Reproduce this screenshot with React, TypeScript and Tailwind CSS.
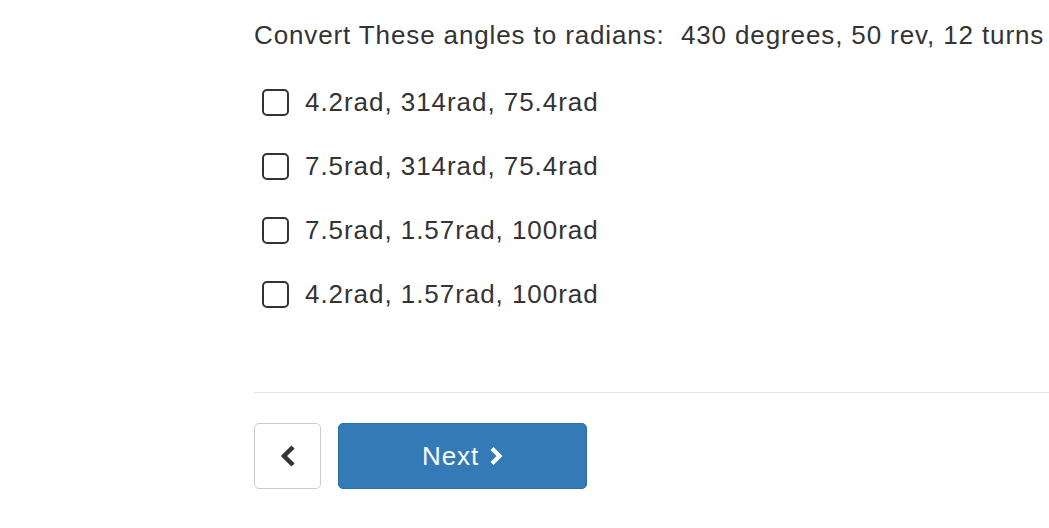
import React from "react";

const options = [
  "4.2rad, 314rad, 75.4rad",
  "7.5rad, 314rad, 75.4rad",
  "7.5rad, 1.57rad, 100rad",
  "4.2rad, 1.57rad, 100rad",
];

export default function App() {
  return (
    <div className="w-[1049px] h-[528px] bg-white overflow-hidden text-[#333]" style={{ fontFamily: '"Liberation Sans", Arial, sans-serif' }}>
      <div className="pl-[254px] pt-[17px]">
        <p className="text-[26px] leading-[36px] whitespace-nowrap tracking-[0.88px]">
          Convert These angles to radians:&nbsp; 430 degrees, 50 rev, 12 turns
        </p>
        <div className="mt-[31px] flex flex-col gap-[28px] pl-[8px]">
          {options.map((o) => (
            <label key={o} className="flex items-center h-[36px]">
              <span className="w-[27px] h-[27px] rounded-[5px] border-[2.5px] border-[#333] shrink-0" />
              <span className="ml-[16px] text-[26px] leading-[36px] whitespace-nowrap tracking-[0.95px]">{o}</span>
            </label>
          ))}
        </div>
        <div className="mt-[80px] border-t border-[#e5e5e5]" />
        <div className="mt-[30px] flex gap-[17px]">
          <button className="w-[67px] h-[66px] rounded-[5px] border border-[#ccc] bg-white flex items-center justify-center text-[#333]">
            <svg viewBox="0 0 16 22" className="w-[16px] h-[22px]" fill="none" stroke="currentColor" strokeWidth={4.4} strokeLinecap="butt" strokeLinejoin="miter">
              <path d="M13 2 L4 11 L13 20" />
            </svg>
          </button>
          <button className="w-[249px] h-[66px] rounded-[5px] border border-[#2e6da4] bg-[#337ab7] flex items-center justify-center text-white text-[26px] tracking-[0.9px]">
            Next
            <svg viewBox="0 0 14 18" className="w-[14px] h-[18px] ml-[10px]" fill="none" stroke="currentColor" strokeWidth={4.2} strokeLinecap="butt" strokeLinejoin="miter">
              <path d="M3 1.5 L10.5 9 L3 16.5" />
            </svg>
          </button>
        </div>
      </div>
    </div>
  );
}
